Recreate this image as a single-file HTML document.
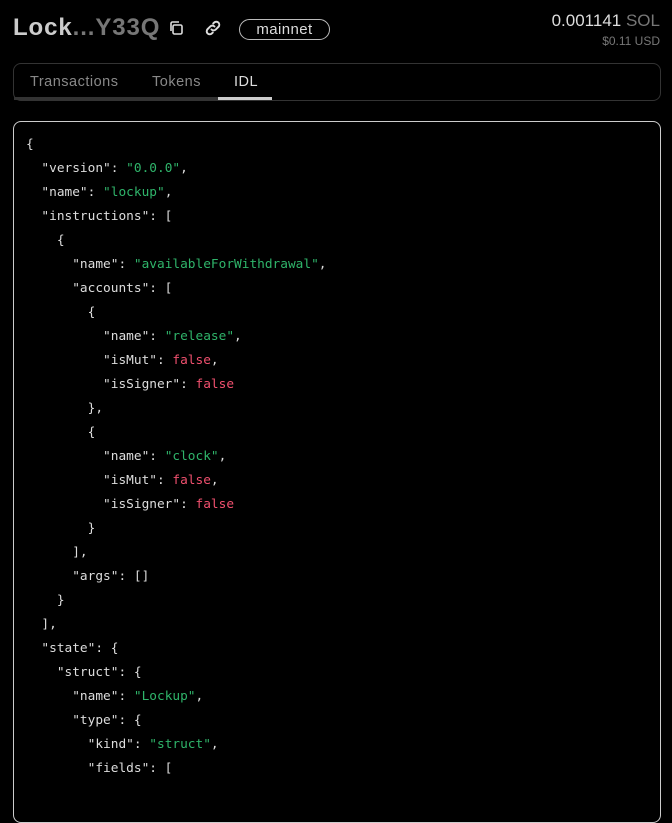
<!DOCTYPE html>
<html><head><style>
body{margin:0;background:#000;width:672px;height:786px;overflow:hidden;font-family:"Liberation Sans",sans-serif;position:relative}
.t{position:absolute;left:13px;top:14px;font-size:24px;font-weight:bold;color:#ccc;letter-spacing:0.9px}
.t span{color:#777}
.pill{position:absolute;left:239px;top:19px;width:89px;height:19px;border:1px solid #bbb;border-radius:11px;color:#ddd;font-size:15px;text-align:center;line-height:19px;letter-spacing:0.4px}
.bal{position:absolute;right:12px;top:11px;color:#ddd;font-size:17px;text-align:right}
.bal span{color:#777}
.usd{position:absolute;right:12px;top:34px;color:#777;font-size:12px}
.tabs{position:absolute;left:13px;top:63px;width:646px;height:36px;border:1px solid #333;border-radius:8px}
.tab{position:absolute;top:10px;font-size:14.5px;color:#888;letter-spacing:0.5px}
.ul{position:absolute;left:218px;top:97px;width:54px;height:3px;background:#ccc}
.ul2{position:absolute;left:14px;top:97px;width:204px;height:3px;background:#333}
.card{position:absolute;left:13px;top:121px;width:646px;height:700px;border:1px solid #ccc;border-radius:8px}
pre{position:absolute;left:26px;top:133px;margin:0;font-family:"DejaVu Sans Mono",monospace;font-size:12.8px;line-height:24px;color:#ddd}
.s{color:#2fb46a}.f{color:#f0506e}
</style></head><body>
<div class="t">Lock<span>...Y33Q</span></div>
<svg style="position:absolute;left:168px;top:20px" width="16" height="16" viewBox="0 0 16 16" fill="none" stroke="#ddd" stroke-width="1.6"><rect x="5" y="5" width="9" height="9" rx="1.5"/><path d="M3 11V3.5A1.5 1.5 0 0 1 4.5 2H11"/></svg>
<svg style="position:absolute;left:204px;top:19px" width="18" height="18" viewBox="0 0 24 24" fill="none" stroke="#ddd" stroke-width="2.6" stroke-linecap="round"><path d="M10 14a4 4 0 0 0 5.7 0l3.5-3.5a4 4 0 0 0-5.7-5.7l-1.2 1.2"/><path d="M14 10a4 4 0 0 0-5.7 0l-3.5 3.5a4 4 0 0 0 5.7 5.7l1.2-1.2"/></svg>
<div class="pill">mainnet</div>
<div class="bal">0.001141 <span>SOL</span></div>
<div class="usd">$0.11 USD</div>
<div class="tabs"></div>
<div class="ul2"></div>
<div class="tab" style="left:30px;top:74px">Transactions</div>
<div class="tab" style="left:152px;top:74px">Tokens</div>
<div class="tab" style="left:234px;top:74px;color:#ddd">IDL</div>
<div class="ul"></div>
<div class="card"></div>
<pre>{
  "version": <span class="s">"0.0.0"</span>,
  "name": <span class="s">"lockup"</span>,
  "instructions": [
    {
      "name": <span class="s">"availableForWithdrawal"</span>,
      "accounts": [
        {
          "name": <span class="s">"release"</span>,
          "isMut": <span class="f">false</span>,
          "isSigner": <span class="f">false</span>
        },
        {
          "name": <span class="s">"clock"</span>,
          "isMut": <span class="f">false</span>,
          "isSigner": <span class="f">false</span>
        }
      ],
      "args": []
    }
  ],
  "state": {
    "struct": {
      "name": <span class="s">"Lockup"</span>,
      "type": {
        "kind": <span class="s">"struct"</span>,
        "fields": [
</pre>
</body></html>
